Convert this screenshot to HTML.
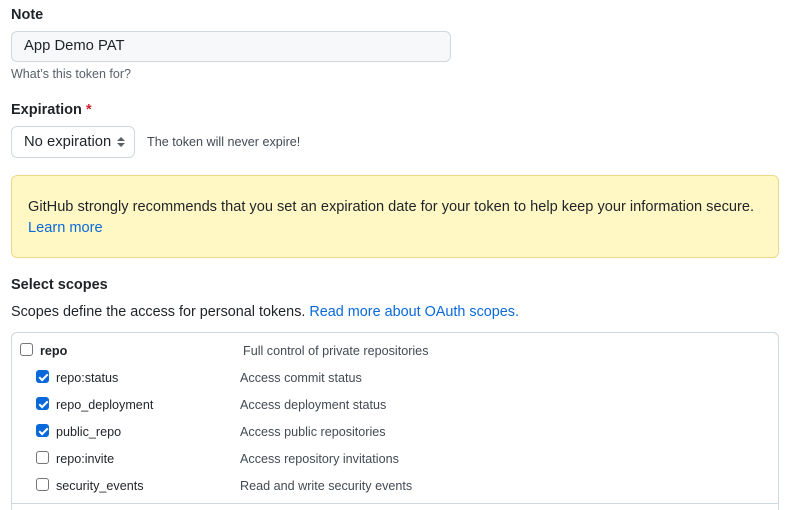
<!DOCTYPE html>
<html style="overflow:hidden;height:510px"><head><style>
body{margin:0;width:800px;height:510px;overflow:hidden;background:#fff;font-family:"Liberation Sans",sans-serif;color:#1f2328;position:relative}
.a{position:absolute;white-space:nowrap}
.b{font-weight:bold;font-size:14.5px}
.cb{position:absolute;width:11px;height:11px;border:1px solid #767676;border-radius:3px;background:#fff}
.ck{background:#0969da;border-color:#0969da}
.ck::after{content:"";position:absolute;left:3.5px;top:0.5px;width:3px;height:7px;border:solid #fff;border-width:0 2px 2px 0;transform:rotate(45deg)}
.s{font-size:12.6px;color:#1f2328}
.d{font-size:12.6px;color:#424a53}
</style></head><body>
<div class="a b" style="left:11px;top:7px">Note</div>
<div class="a" style="left:11px;top:31px;width:438px;height:29px;background:#f6f8fa;border:1px solid #d0d7de;border-radius:6px"></div>
<div class="a" style="left:24px;top:38px;font-size:14.8px">App Demo PAT</div>
<div class="a" style="left:11px;top:67px;font-size:12.5px;color:#57606a">What’s this token for?</div>
<div class="a b" style="left:11px;top:102px">Expiration <span style="color:#cf222e">*</span></div>
<div class="a" style="left:11px;top:126px;width:122px;height:30px;background:#fff;border:1px solid #d0d7de;border-radius:6px"></div>
<div class="a" style="left:24px;top:134px;font-size:14.8px">No expiration</div>
<svg class="a" style="left:117px;top:136px" width="8" height="12"><path d="M0 5L4 1L8 5Z M0 7L4 11L8 7Z" fill="#57606a"/></svg>
<div class="a" style="left:147px;top:135px;font-size:12.6px;color:#424a53">The token will never expire!</div>
<div class="a" style="left:11px;top:175px;width:766px;height:81px;background:#fff8c5;border:1px solid #eed888;border-radius:6px"></div>
<div class="a" style="left:28px;top:199px;font-size:14.6px">GitHub strongly recommends that you set an expiration date for your token to help keep your information secure.</div>
<div class="a" style="left:28px;top:220px;font-size:14.6px;color:#0969da">Learn more</div>
<div class="a b" style="left:11px;top:277px">Select scopes</div>
<div class="a" style="left:11px;top:304px;font-size:14.4px">Scopes define the access for personal tokens. <span style="color:#0969da">Read more about OAuth scopes.</span></div>
<div class="a" style="left:11px;top:332px;width:766px;height:200px;border:1px solid #d0d7de;border-radius:6px"></div>
<div class="a" style="left:12px;top:503px;width:766px;height:1px;background:#d0d7de"></div>
<div class="cb" style="left:20px;top:343px"></div>
<div class="a s" style="left:40px;top:344px;font-weight:bold">repo</div>
<div class="a d" style="left:243px;top:344px">Full control of private repositories</div>
<div class="cb ck" style="left:36px;top:370px"></div><div class="a s" style="left:56px;top:371px">repo:status</div><div class="a d" style="left:240px;top:371px">Access commit status</div>
<div class="cb ck" style="left:36px;top:397px"></div><div class="a s" style="left:56px;top:398px">repo_deployment</div><div class="a d" style="left:240px;top:398px">Access deployment status</div>
<div class="cb ck" style="left:36px;top:424px"></div><div class="a s" style="left:56px;top:425px">public_repo</div><div class="a d" style="left:240px;top:425px">Access public repositories</div>
<div class="cb" style="left:36px;top:451px"></div><div class="a s" style="left:56px;top:452px">repo:invite</div><div class="a d" style="left:240px;top:452px">Access repository invitations</div>
<div class="cb" style="left:36px;top:478px"></div><div class="a s" style="left:56px;top:479px">security_events</div><div class="a d" style="left:240px;top:479px">Read and write security events</div>
</body></html>
